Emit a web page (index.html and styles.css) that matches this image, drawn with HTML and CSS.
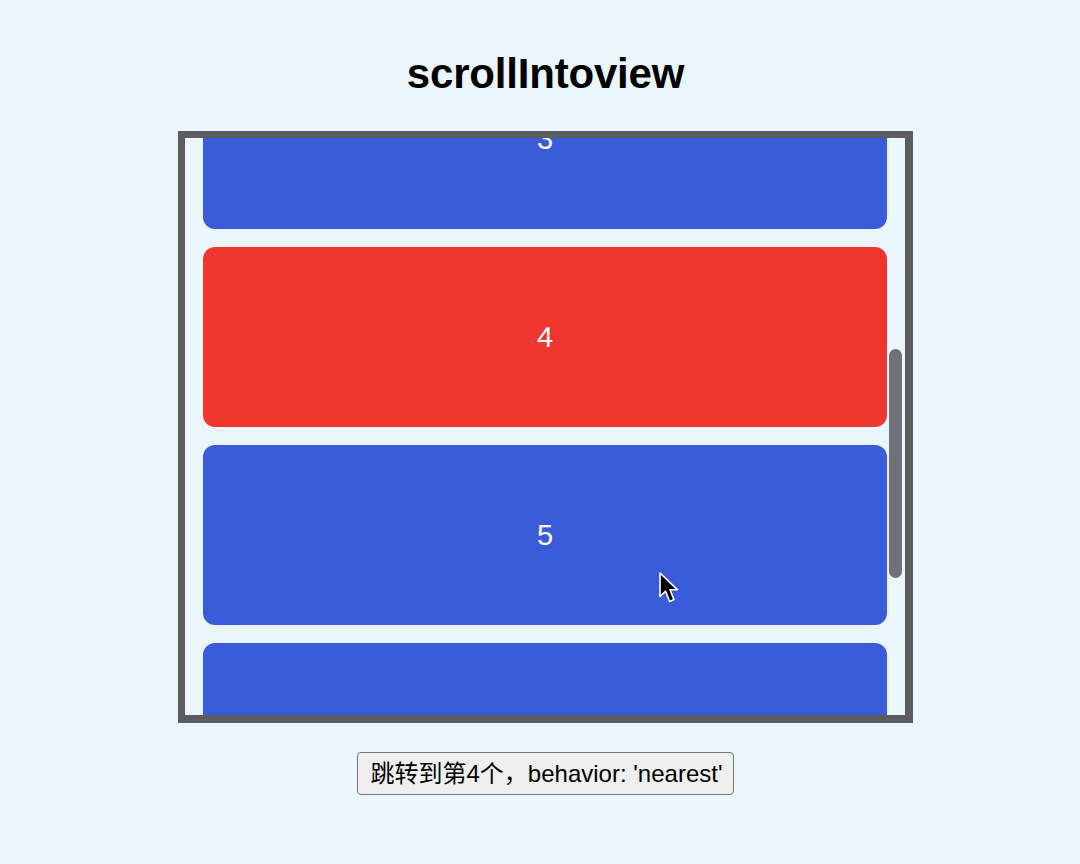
FILE: index.html
```html
<!DOCTYPE html>
<html lang="zh">
<head>
<meta charset="utf-8">
<title>scrollIntoview</title>
<link rel="stylesheet" href="styles.css">
</head>
<body>
<main class="page">
  <h1 class="title">scrollIntoview</h1>
  <div class="viewport">
    <div class="clip" id="clip">
      <div class="track">
        <div class="item">1</div>
        <div class="item">2</div>
        <div class="item">3</div>
        <div class="item item-active">4</div>
        <div class="item">5</div>
        <div class="item">6</div>
        <div class="item">7</div>
      </div>
    </div>
    <div class="bar"><div class="thumb"></div></div>
  </div>
  <button class="jump" type="button">跳转到第4个，behavior: 'nearest'</button>
</main>
<svg class="cursor" width="24" height="34" viewBox="0 0 24 34" aria-hidden="true">
  <path d="M2 2 L2 25.5 L7.6 20.2 L11.6 30.5 L16 28.6 L12 18.8 L19.6 18.8 Z" fill="#000" stroke="#fff" stroke-width="1.6" stroke-linejoin="round"/>
</svg>
<script src="script.js"></script>
</body>
</html>
```

FILE: styles.css
```css
html, body {
  margin: 0;
  padding: 0;
}

body {
  background: #ebf5fc;
  font-family: "Liberation Sans", "Noto Sans CJK SC", Arial, sans-serif;
  color: #000;
  width: 1080px;
  height: 864px;
  overflow: hidden;
  position: relative;
}

.page {
  display: flex;
  flex-direction: column;
  align-items: center;
  padding: 50px 0 0 11px;
}

.title {
  margin: 0;
  font-size: 42px;
  line-height: 48px;
  font-weight: 700;
  letter-spacing: -0.2px;
}

.viewport {
  margin-top: 33px;
  width: 720px;
  height: 577px;
  border-style: solid;
  border-color: #5c5d5f;
  border-width: 7px 8px 8px 7px;
  background: #ebf5fc;
  display: flex;
}

.clip {
  flex: 1;
  height: 100%;
  overflow: hidden;
}

.bar {
  width: 18px;
  flex: none;
  height: 100%;
  background: #ebf5fc;
}

.thumb {
  margin: 211px 0 0 2px;
  width: 13px;
  height: 229px;
  border-radius: 7px;
  background: #6e7175;
}

.track {
  display: flex;
  flex-direction: column;
  gap: 18px;
  padding: 36px 0 36px 18px;
}

.item {
  height: 180px;
  border-radius: 12px;
  background: #3a5cdb;
  color: #fff;
  font-size: 29px;
  display: flex;
  align-items: center;
  justify-content: center;
}

.item-active {
  background: #f0372f;
}

.jump {
  margin-top: 29px;
  font-family: "Liberation Sans", "Noto Sans CJK SC", Arial, sans-serif;
  font-size: 24px;
  line-height: 28px;
  color: #000;
  background: #efefef;
  border: 1.5px solid #767676;
  border-radius: 4px;
  padding: 6.5px 11px 6.5px 13px;
}

.cursor {
  position: absolute;
  left: 658px;
  top: 571px;
}
```

FILE: script.js
```js
document.getElementById('clip').scrollTop = 521;
```
